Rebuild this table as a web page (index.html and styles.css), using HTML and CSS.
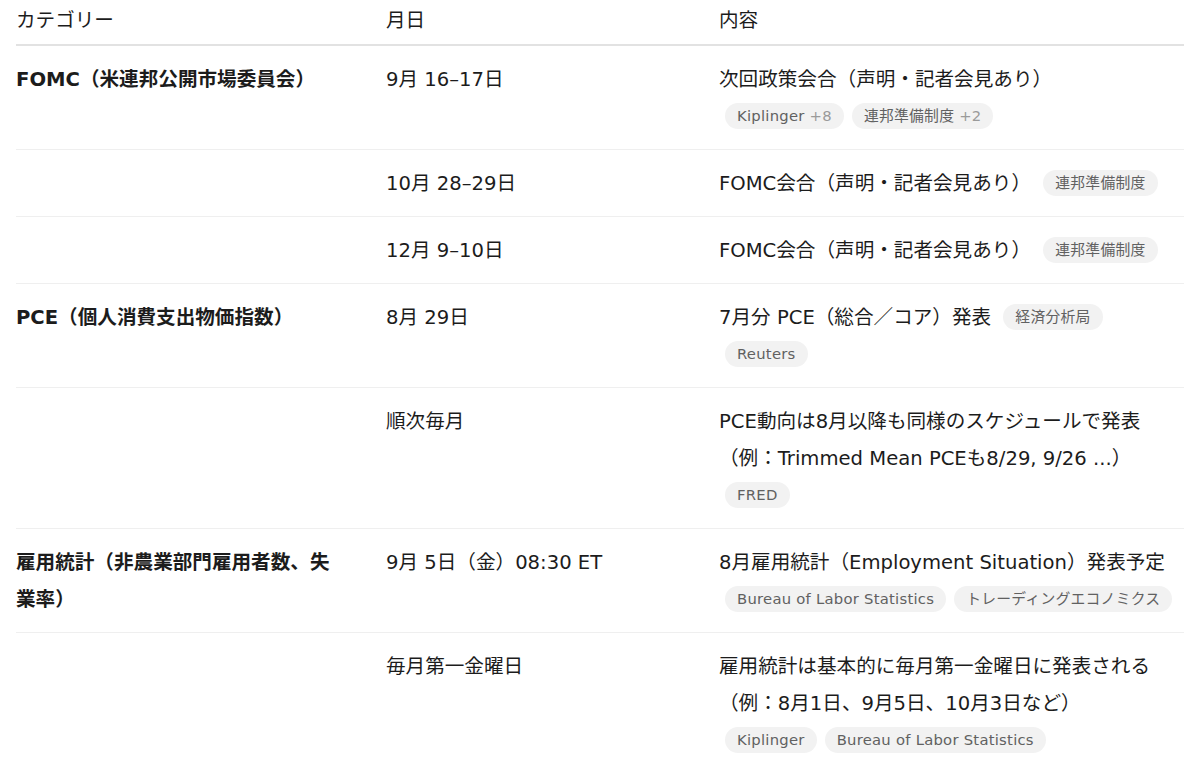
FILE: index.html
```html
<!DOCTYPE html>
<html lang="ja">
<head>
<meta charset="utf-8">
<title>経済指標スケジュール</title>
<link rel="stylesheet" href="styles.css">
</head>
<body>
<div class="wrap">
<table class="sched">
  <colgroup>
    <col class="c1"><col class="c2"><col class="c3">
  </colgroup>
  <thead>
    <tr><th>カテゴリー</th><th>月日</th><th>内容</th></tr>
  </thead>
  <tbody>
    <tr>
      <td class="cat">FOMC（米連邦公開市場委員会）</td>
      <td>9月 16–17日</td>
      <td>次回政策会合（声明・記者会見あり） <span class="grp"><span class="chip">Kiplinger <span class="more">+8</span></span><span class="chip">連邦準備制度 <span class="more">+2</span></span></span></td>
    </tr>
    <tr>
      <td class="cat"></td>
      <td>10月 28–29日</td>
      <td>FOMC会合（声明・記者会見あり） <span class="grp"><span class="chip">連邦準備制度</span></span></td>
    </tr>
    <tr>
      <td class="cat"></td>
      <td>12月 9–10日</td>
      <td>FOMC会合（声明・記者会見あり） <span class="grp"><span class="chip">連邦準備制度</span></span></td>
    </tr>
    <tr>
      <td class="cat">PCE（個人消費支出物価指数）</td>
      <td>8月 29日</td>
      <td>7月分 PCE（総合／コア）発表 <span class="grp"><span class="chip">経済分析局</span></span><br><span class="grp"><span class="chip">Reuters</span></span></td>
    </tr>
    <tr>
      <td class="cat"></td>
      <td>順次毎月</td>
      <td>PCE動向は8月以降も同様のスケジュールで発表<br>（例：Trimmed Mean PCEも8/29, 9/26 ...） <span class="grp"><span class="chip">FRED</span></span></td>
    </tr>
    <tr>
      <td class="cat">雇用統計（非農業部門雇用者数、失業率）</td>
      <td>9月 5日（金）08:30 ET</td>
      <td>8月雇用統計（Employment Situation）発表予定 <span class="grp"><span class="chip">Bureau of Labor Statistics</span><span class="chip">トレーディングエコノミクス</span></span></td>
    </tr>
    <tr>
      <td class="cat"></td>
      <td>毎月第一金曜日</td>
      <td>雇用統計は基本的に毎月第一金曜日に発表される<br>（例：8月1日、9月5日、10月3日など） <span class="grp"><span class="chip">Kiplinger</span><span class="chip">Bureau of Labor Statistics</span></span></td>
    </tr>
  </tbody>
</table>
</div>
</body>
</html>
```

FILE: styles.css
```css
html, body {
  margin: 0;
  padding: 0;
  background: #ffffff;
}

body {
  font-family: "DejaVu Sans", "Noto Sans CJK JP", sans-serif;
  color: #1c1c1c;
  font-size: 19.6px;
  line-height: 37px;
}

.wrap {
  padding: 0 16px;
}

.sched {
  width: 100%;
  border-collapse: collapse;
  table-layout: fixed;
}

.c1 { width: 370px; }
.c2 { width: 333px; }
.c3 { width: auto; }

.sched th {
  text-align: left;
  font-weight: 400;
  padding: 2px 46px 5px 0;
  border-bottom: 2px solid #e2e2e2;
  vertical-align: top;
}

.sched th:last-child { padding-right: 0; }

.sched td {
  padding: 15px 46px 14px 0;
  vertical-align: top;
  border-bottom: 1px solid #efefef;
}

.sched td:last-child { padding-right: 0; }

.sched tbody tr:last-child td { border-bottom: none; }

.cat {
  font-weight: 600;
}

.grp {
  display: inline-flex;
  white-space: nowrap;
  vertical-align: middle;
  gap: 8px;
  margin-left: 6px;
  position: relative;
  top: -2px;
}

.chip {
  display: inline-block;
  background: #f2f2f2;
  color: #616161;
  font-weight: 400;
  font-size: 14.8px;
  letter-spacing: 0.25px;
  line-height: 26px;
  height: 26px;
  padding: 0 12px;
  border-radius: 13px;
}

.more {
  color: #9a9a9a;
}
```
